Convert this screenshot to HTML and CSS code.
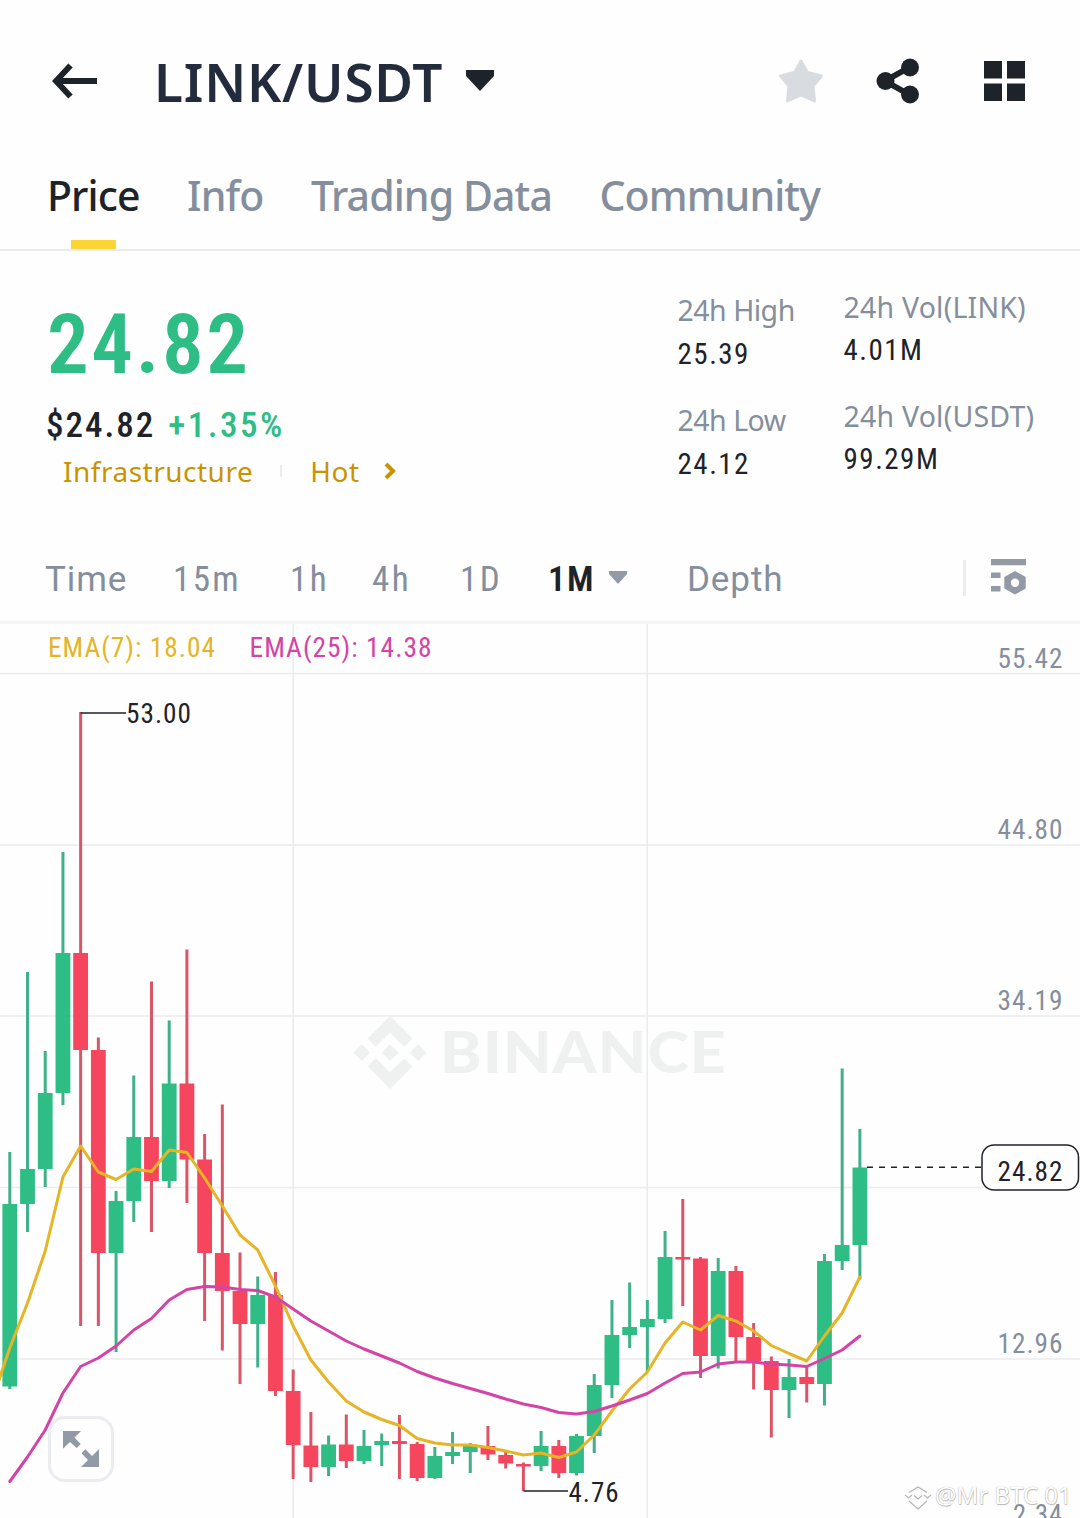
FILE: index.html
```html
<!DOCTYPE html>
<html lang="en">
<head>
    <meta charset="UTF-8">
    <meta name="viewport" content="width=device-width, initial-scale=1.0">
    <title>LINK/USDT</title>
    <link rel="stylesheet" href="styles.css">
</head>
<body>

    <header class="header">
        <svg class="back" viewBox="0 0 46 36" width="46" height="36">
            <path d="M45 18H4M18.500 2.500L4 18L18.500 33.500" fill="none" stroke="#1e2329" stroke-width="6"/>
        </svg>
        <h1 class="pair">LINK/USDT</h1>
        <svg class="caret" viewBox="0 0 28 21" width="28" height="21">
            <path d="M0 0H28V6L14 21L0 6Z" fill="#1e2329"/>
        </svg>
        <div class="actions">
            <svg viewBox="0 0 46 46" width="46" height="46">
                <path d="M23 3L29.500 14.500L43.500 18L35 28L36.500 43L23 37L9.500 43L11 28L2.500 18L16.500 14.500Z" fill="#d8dce1" stroke="#d8dce1" stroke-width="3" stroke-linejoin="round"/>
            </svg>
            <svg class="share" viewBox="0 0 44 46" width="44" height="46">
                <path d="M34 9L9 23L34 37" fill="none" stroke="#1e2329" stroke-width="6"/>
                <circle cx="9.500" cy="23" r="9"/>
                <circle cx="34" cy="9.500" r="9"/>
                <circle cx="34" cy="36.500" r="9"/>
            </svg>
            <svg class="grid-icon" viewBox="0 0 41 40" width="41" height="40">
                <path d="M0 0H18V17.500H0ZM23 0H41V17.500H23ZM0 22.500H18V40H0ZM23 22.500H41V40H23Z"/>
            </svg>
        </div>
    </header>

    <nav class="tabs">
        <a class="tab active">Price</a>
        <a class="tab">Info</a>
        <a class="tab">Trading Data</a>
        <a class="tab">Community</a>
    </nav>

    <section class="summary">
        <div class="quote">
            <div class="last">24.82</div>
            <div class="fiat">$24.82 <span class="change">+1.35%</span></div>
            <div class="tags">
                <span>Infrastructure</span>
                <i class="sep"></i>
                <span>Hot</span>
                <svg class="chevron" viewBox="0 0 12 18" width="12" height="18">
                    <path d="M2 2L9 9L2 16" fill="none" stroke="#c99400" stroke-width="4"/>
                </svg>
            </div>
        </div>
        <div class="stats">
            <div class="stat tight">
                <span class="label">24h High</span>
                <span class="value">25.39</span>
            </div>
            <div class="stat tight">
                <span class="label">24h Low</span>
                <span class="value">24.12</span>
            </div>
        </div>
        <div class="stats volume">
            <div class="stat">
                <span class="label">24h Vol(LINK)</span>
                <span class="value">4.01M</span>
            </div>
            <div class="stat">
                <span class="label">24h Vol(USDT)</span>
                <span class="value">99.29M</span>
            </div>
        </div>
    </section>

    <div class="toolbar">
        <div class="intervals">
            <span class="word">Time</span>
            <span>15m</span>
            <span>1h</span>
            <span>4h</span>
            <span>1D</span>
            <span class="current">1M
                <svg viewBox="0 0 18 13" width="18" height="13"><path d="M0 0H18V3L9 13L0 3Z" fill="#929aa5"/></svg>
            </span>
            <span class="word">Depth</span>
        </div>
        <svg class="settings" viewBox="0 0 35 36" width="35" height="36">
            <path d="M0 0H35V6.300H0ZM0 13.500H9.500V19H0ZM0 27H9.500V32.500H0Z"/>
            <path fill-rule="evenodd" d="M24 12L34.700 18V29.500L24 35.500L13.300 29.500V18ZM24 19.500A4.200 4.200 0 1 0 24 27.900A4.200 4.200 0 1 0 24 19.500Z"/>
        </svg>
    </div>

    <div class="chart">
        <svg id="chart" viewBox="0 624 1080 894" width="1080" height="894">
            <g class="brand">
                <path transform="translate(353.5 1016) scale(.577)" d="M38.730 53.200l24.590-24.580 24.600 24.600 14.300-14.310L63.320 0l-38.900 38.900zM0 63.310L14.300 49l14.310 14.310-14.310 14.300zM38.730 73.410L63.320 98l24.600-24.600 14.310 14.290-38.900 38.910-38.910-38.880zM98 63.310l14.300-14.310 14.310 14.300-14.310 14.320zM77.830 63.300L63.320 48.780 48.810 63.280l14.510 14.500z"/>
                <text x="440" y="1073" textLength="287" lengthAdjust="spacingAndGlyphs">BINANCE</text>
            </g>
            <path class="gridlines" d="M0 673.500H1080M0 845H1080M0 1016H1080M0 1187.500H1080M0 1359H1080M293.200 624V1518M647.200 624V1518"/>
            <g id="candles"></g>
            <path id="ema7" class="ema ema7"/>
            <path id="ema25" class="ema ema25"/>

            <text class="ema7-text" x="48" y="657" textLength="168" lengthAdjust="spacingAndGlyphs">EMA(7): 18.04</text>
            <text class="ema25-text" x="249.500" y="657" textLength="183" lengthAdjust="spacingAndGlyphs">EMA(25): 14.38</text>

            <g class="axis">
                <text x="997.500" y="668" textLength="66" lengthAdjust="spacingAndGlyphs">55.42</text>
                <text x="997.500" y="839" textLength="66" lengthAdjust="spacingAndGlyphs">44.80</text>
                <text x="997.500" y="1010" textLength="66" lengthAdjust="spacingAndGlyphs">34.19</text>
                <text x="997.500" y="1353" textLength="66" lengthAdjust="spacingAndGlyphs">12.96</text>
                <text x="1013" y="1524" textLength="50" lengthAdjust="spacingAndGlyphs">2.34</text>
            </g>

            <path class="leader" d="M80.600 713H126M523.500 1491H568"/>
            <text class="mark" x="126" y="723" textLength="66" lengthAdjust="spacingAndGlyphs">53.00</text>
            <text class="mark" x="568.500" y="1502" textLength="51" lengthAdjust="spacingAndGlyphs">4.76</text>

            <path class="dashes" d="M867 1167.200H982"/>
            <rect class="last-box" x="982" y="1145" width="96.500" height="45" rx="12"/>
            <text class="mark" x="997.500" y="1181" textLength="66" lengthAdjust="spacingAndGlyphs">24.82</text>
        </svg>

        <button class="expand">
            <svg viewBox="0 0 36 36" width="36" height="36">
                <path d="M0 0H18L11.500 6.500L17.700 13L13.700 17L7 11L0 17.700ZM36 36H18L25 29L18.500 22.300L22.300 18.300L29 25L36 18Z" fill="#929aa5"/>
            </svg>
        </button>

        <div class="author">
            <svg viewBox="0 0 28 24" width="28" height="24">
                <path d="M5 6.500L14 1L23 6.500M1 9L4.500 12L8 9M20 9L23.500 12L27 9M10 9.500L14 13L18 9.500M5 15L14 23L23 15" fill="none" stroke="#b4b4b4" stroke-width="1.200"/>
            </svg>
            <span>@Mr BTC 01</span>
        </div>
    </div>

    <script>
        // [high, body top, body bottom, low, up]
        const candles = [
            [1152, 1204, 1386.5, 1389, 1],
            [972, 1169, 1204, 1232, 1],
            [1051, 1093, 1169, 1187, 1],
            [852, 953, 1093, 1105, 1],
            [712, 953, 1050, 1326, 0],
            [1037.5, 1050, 1253, 1326, 0],
            [1191, 1201, 1253, 1352, 1],
            [1075.5, 1137, 1201, 1222, 1],
            [981.5, 1137, 1181, 1232, 0],
            [1020.5, 1083.5, 1181, 1188, 1],
            [949.5, 1083.5, 1159.5, 1203, 0],
            [1134, 1159.5, 1253, 1321, 0],
            [1104.5, 1253, 1291, 1350.5, 0],
            [1252.5, 1291, 1324, 1384, 0],
            [1276.5, 1295, 1324, 1367.5, 1],
            [1272, 1295, 1391, 1396, 0],
            [1369.5, 1391, 1445, 1479, 0],
            [1412, 1445.5, 1467, 1482, 0],
            [1435.5, 1444.5, 1467, 1476, 1],
            [1414.5, 1444.5, 1461, 1468, 0],
            [1430, 1446, 1461, 1464, 1],
            [1433.5, 1441, 1445, 1466, 1],
            [1415, 1441, 1444, 1479, 0],
            [1442, 1444, 1478, 1481, 0],
            [1447, 1456, 1478, 1479, 1],
            [1432, 1452, 1456, 1464, 1],
            [1443, 1446, 1452, 1473, 1],
            [1426, 1446, 1454.5, 1460, 0],
            [1452, 1455, 1463.5, 1468.5, 0],
            [1462.5, 1464, 1466.5, 1491, 0],
            [1431, 1446, 1466, 1471, 1],
            [1440, 1446, 1473, 1478, 0],
            [1434, 1436, 1473, 1475.5, 1],
            [1374, 1385, 1436, 1453, 1],
            [1300, 1335, 1385, 1398, 1],
            [1282.5, 1327, 1335, 1348, 1],
            [1300, 1319, 1327, 1372, 1],
            [1231, 1257, 1319, 1323, 1],
            [1199, 1257, 1259.5, 1306, 0],
            [1257, 1258.5, 1356, 1378, 0],
            [1258, 1271, 1356, 1368.5, 1],
            [1266, 1271, 1337, 1361, 0],
            [1323, 1337, 1361, 1389.5, 0],
            [1356.5, 1361, 1390, 1437.5, 0],
            [1359, 1377, 1390, 1418, 1],
            [1367, 1377, 1384, 1402.5, 0],
            [1254, 1261, 1384, 1405.5, 1],
            [1068.5, 1245, 1261, 1270, 1],
            [1129, 1167.5, 1245, 1279.5, 1]
        ];

        const ema7 = [1348, 1303, 1251, 1177, 1146, 1172, 1179.5, 1169, 1171.5, 1150, 1152.5, 1178, 1206, 1235, 1250, 1286,
            1326, 1360, 1382, 1401, 1412, 1419.5, 1425.5, 1438.5, 1443, 1445, 1445, 1447.5, 1451, 1455, 1453, 1457.5,
            1452, 1435, 1411, 1389, 1372, 1343, 1322, 1330, 1315.5, 1321, 1331, 1345.5, 1353.5, 1361, 1336, 1313, 1277];

        const ema25 = [1481.5, 1457, 1430, 1393, 1366.5, 1358, 1346, 1330, 1318.5, 1300, 1289.5, 1286.5, 1287, 1289.5, 1290.5, 1297,
            1309, 1321, 1331, 1341, 1349, 1356, 1363, 1371.5, 1378, 1383.5, 1388.5, 1393.5, 1399, 1404, 1407.5, 1412.5,
            1414, 1411.5, 1406, 1400, 1393.5, 1383, 1373.5, 1372, 1364, 1362, 1362, 1364, 1365, 1366.5, 1358.5, 1350, 1336];

        const step = 17.71;
        const xAt = i => 9.8 + i * step;

        document.getElementById('candles').innerHTML = candles.map(([high, top, bottom, low, up], i) => {
            const x = xAt(i);
            return `<g class="${up ? 'up' : 'down'}">
                <rect class="wick" x="${x - 1.5}" y="${high}" width="3" height="${low - high}"/>
                <rect x="${x - 7.4}" y="${top}" width="14.8" height="${bottom - top}"/>
            </g>`;
        }).join('');

        function line(values) {
            return values.map((y, i) => `${i ? 'L' : 'M'}${xAt(i)} ${y}`).join('');
        }

        document.getElementById('ema7').setAttribute('d', 'M-2 1383L' + line(ema7).slice(1));
        document.getElementById('ema25').setAttribute('d', line(ema25));
    </script>
</body>
</html>
```
FILE: styles.css
```css
* {
    box-sizing: border-box;
}

body {
    margin: 0;
    background-color: #fefefe;
    color: #1e2329;
    font-family: "Noto Sans", sans-serif;
    height: 1518px;
    overflow: hidden;
}

svg {
    display: block;
    flex: none;
}

/* Header */
.header {
    display: flex;
    align-items: center;
    height: 163px;
    padding: 0 55px 2px 52px;
}

.pair {
    margin: 3px 23px 0 56px;
    font-size: 53px;
    font-weight: 600;
    line-height: 70px;
    letter-spacing: 0.8px;
    color: #232c3c;
}

.actions {
    display: flex;
    align-items: center;
    margin-left: auto;
    fill: #1e2329;
}

.share {
    margin-left: 52px;
    margin-right: 64px;
}

/* Tabs */
.tabs {
    display: flex;
    gap: 47.5px;
    height: 88px;
    padding-left: 47px;
    border-bottom: 2px solid #eaebec;
}

.tab {
    position: relative;
    font-size: 41px;
    font-weight: 500;
    line-height: 64px;
    letter-spacing: -0.9px;
    color: #848e9c;
}

.tab.active {
    color: #1e2329;
}

.tab.active::after {
    content: "";
    position: absolute;
    left: 24px;
    bottom: 0;
    width: 45px;
    height: 9px;
    background-color: #fcd535;
}

/* Price summary */
.summary {
    display: flex;
    height: 283px;
    padding-left: 47px;
}

.quote {
    width: 630.5px;
    padding-top: 52px;
}

.last {
    font-family: Roboto, sans-serif;
    font-stretch: 75%;
    font-size: 83px;
    font-weight: 600;
    line-height: 84px;
    letter-spacing: 2.6px;
    color: #2ebd85;
}

.fiat {
    display: flex;
    gap: 13px;
    margin: 17px 0 0 -1px;
    font-family: Roboto, sans-serif;
    font-stretch: 75%;
    font-size: 35px;
    font-weight: 500;
    line-height: 44px;
    letter-spacing: 2px;
}

.change {
    letter-spacing: 2.5px;
    color: #2ebd85;
}

.tags {
    display: flex;
    align-items: center;
    margin-top: 3px;
    padding-left: 16px;
    font-size: 28px;
    line-height: 40px;
    letter-spacing: 0.5px;
    color: #c99400;
}

.sep {
    width: 2px;
    height: 12px;
    margin: 0 28px 0 27px;
    background-color: #eaecef;
}

.chevron {
    margin-left: 25px;
}

.stats {
    display: flex;
    flex-direction: column;
    gap: 26px;
    width: 166px;
    padding-top: 39px;
}

.volume {
    width: 220px;
    gap: 25px;
    padding-top: 36px;
}

.stat {
    display: flex;
    flex-direction: column;
    gap: 4px;
    white-space: nowrap;
}

.volume .stat {
    gap: 3px;
    padding-bottom: 1px;
}

.label {
    font-size: 28.5px;
    line-height: 40px;
    letter-spacing: 0.2px;
    color: #848e9c;
}

.tight .label {
    letter-spacing: -0.5px;
}

.value {
    font-family: Roboto, sans-serif;
    font-stretch: 75%;
    font-size: 29px;
    line-height: 40px;
    letter-spacing: 1.5px;
}

/* Interval toolbar */
.toolbar {
    display: flex;
    align-items: center;
    height: 90px;
    padding-left: 45px;
    border-bottom: 3px solid #f3f4f5;
}

.intervals {
    display: grid;
    grid-template-columns: 128px 117px 82px 88px 88px 139px 1fr;
    width: 921px;
    height: 36px;
    align-items: center;
    border-right: 3px solid #eaecef;
    font-family: Roboto, sans-serif;
    font-stretch: 75%;
    font-size: 35px;
    line-height: 40px;
    letter-spacing: 2.4px;
    color: #848e9c;
}

.word {
    font-stretch: 100%;
    letter-spacing: 0.9px;
}

.current {
    display: flex;
    align-items: center;
    gap: 14px;
    font-weight: 600;
    letter-spacing: 1.4px;
    color: #1e2329;
}

.current svg {
    margin-bottom: 5px;
}

.settings {
    margin: 0 0 2px 25px;
    fill: #929aa5;
}

/* Chart */
.chart {
    position: relative;
    height: 894px;
}

.chart text {
    font-family: Roboto, sans-serif;
    font-stretch: 75%;
    font-size: 27px;
    letter-spacing: 1px;
}

.chart .brand text {
    font-family: Lato, sans-serif;
    font-size: 57px;
    font-weight: 900;
    letter-spacing: 1px;
}

.brand {
    fill: #eff1f1;
}

.gridlines {
    fill: none;
    stroke: #ececee;
    stroke-width: 1.5;
}

.up {
    fill: #2ebd85;
}

.down {
    fill: #f6465d;
}

.up .wick {
    fill: #3fb188;
}

.down .wick {
    fill: #db5468;
}

.ema {
    fill: none;
    stroke-width: 3;
    stroke-linejoin: round;
    stroke-linecap: round;
}

.ema7 {
    stroke: #e5b526;
}

.ema25 {
    stroke: #d344a6;
}

.ema7-text {
    fill: #e5b526;
}

.ema25-text {
    fill: #d344a6;
}

.axis {
    fill: #848e9c;
}

.mark {
    fill: #1e2329;
}

.leader {
    stroke: #1e2329;
    stroke-width: 1.5;
}

.dashes {
    stroke: #1e2329;
    stroke-width: 1.5;
    stroke-dasharray: 6 6;
}

.last-box {
    fill: #fefefe;
    stroke: #1e2329;
    stroke-width: 1.5;
}

.expand {
    position: absolute;
    left: 48px;
    top: 792px;
    display: flex;
    align-items: center;
    justify-content: center;
    width: 66px;
    height: 66px;
    padding: 0;
    border: 3px solid #eaecef;
    border-radius: 17px;
    background-color: #fefefe;
}

.author {
    position: absolute;
    left: 904px;
    top: 852px;
    display: flex;
    align-items: center;
    gap: 3px;
    font-size: 24px;
    line-height: 38px;
    white-space: nowrap;
    color: #fff;
    text-shadow: 0 0 1px #999, 0.5px 0.5px 1px #bbb;
}

.author svg {
    margin-top: 5px;
}
```
